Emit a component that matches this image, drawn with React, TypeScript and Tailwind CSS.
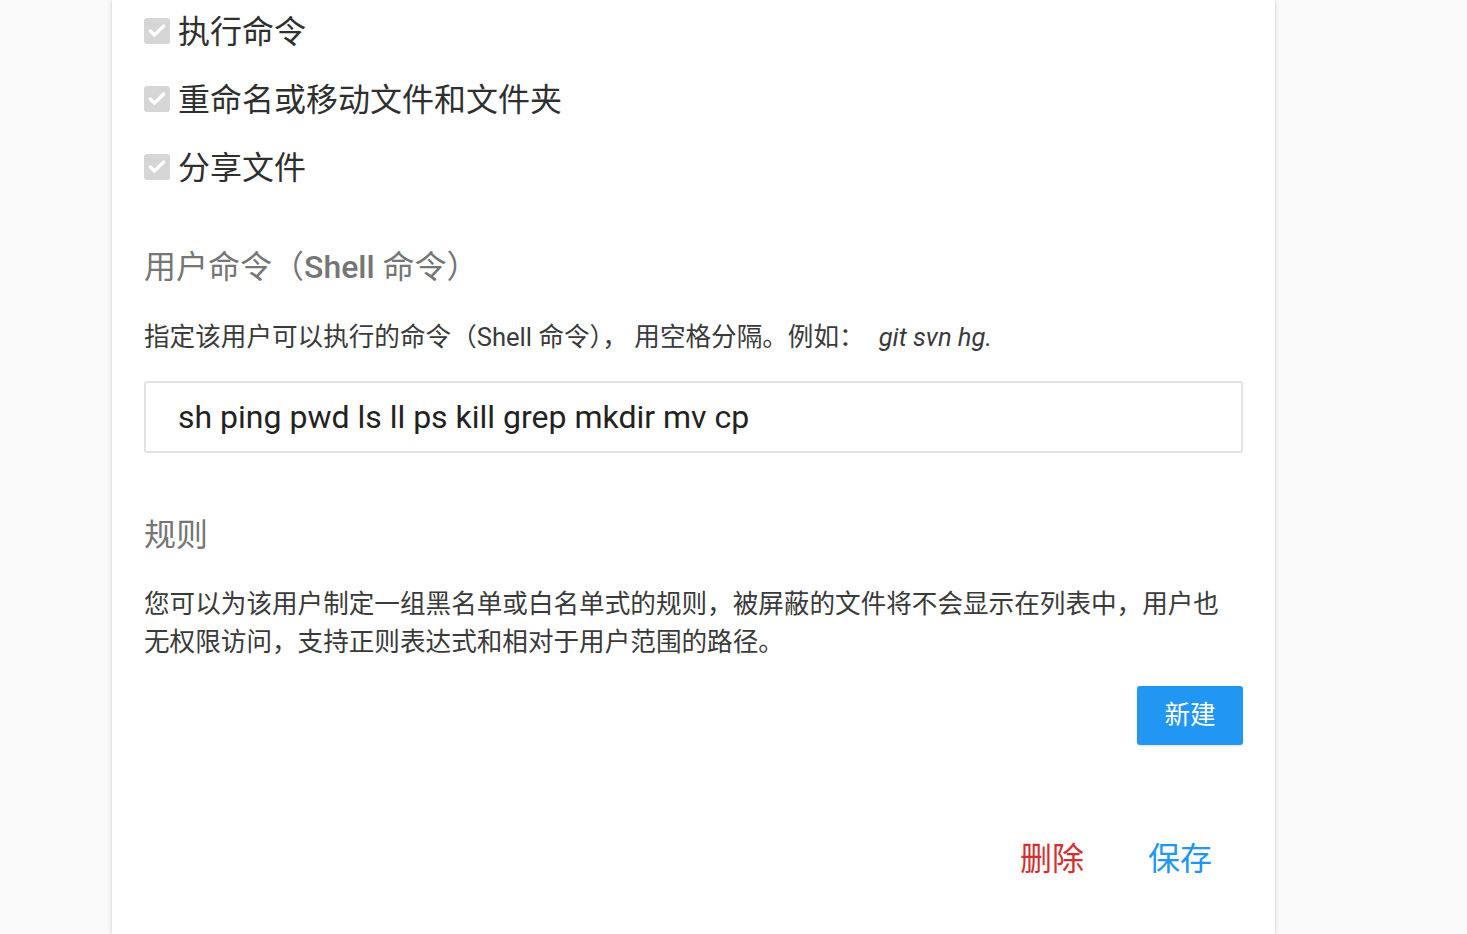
import { Check } from "lucide-react";

const perms = ["执行命令", "重命名或移动文件和文件夹", "分享文件"];

const font = "font-['Roboto','Noto_Sans_CJK_SC',sans-serif]";

export default function App() {
  return (
    <div className={`min-h-[934px] bg-[#fafafa] ${font}`}>
      <div className="ml-[112px] w-[1163px] min-h-[934px] bg-white px-8 shadow-[0_0_4px_rgba(0,0,0,0.12),0_2px_6px_rgba(0,0,0,0.08)]">
        <div className="flex flex-col gap-2 pt-[1px]">
          {perms.map((p) => (
            <label key={p} className="flex h-[60px] items-center gap-2">
              <span className="flex h-[26px] w-[26px] items-center justify-center rounded-[3px] bg-[#d6d6d6]">
                <Check className="h-[20px] w-[20px] text-white" strokeWidth={4} />
              </span>
              <span className="pt-[2px] text-[32px] leading-none text-[#2f2f2f]">{p}</span>
            </label>
          ))}
        </div>

        <h3 className="mt-[50px] text-[32px] leading-[40px] text-[#767676]">
          用户命令（<span className="font-medium">Shell</span> 命令）
        </h3>
        <p className="mt-[31px] text-[25.6px] leading-[38px] text-[#3a3a3a]">
          {"指定该用户可以执行的命令（Shell 命令）， 用空格分隔。例如："}
          <i className="ml-[14px]">git svn hg.</i>
        </p>
        <input
          readOnly
          value="sh ping pwd ls ll ps kill grep mkdir mv cp"
          className="mt-[25px] h-[72px] w-full rounded-[3px] border-2 border-[#e2e2e2] px-[32px] text-[32px] text-[#222] outline-none"
        />

        <h3 className="mt-[62px] text-[32px] leading-[40px] text-[#767676]">规则</h3>
        <p className="mt-[31px] text-[25.6px] leading-[37.5px] text-[#3a3a3a]">
          您可以为该用户制定一组黑名单或白名单式的规则，被屏蔽的文件将不会显示在列表中，用户也无权限访问，支持正则表达式和相对于用户范围的路径。
        </p>
        <div className="mt-[25px] flex justify-end">
          <button className="h-[59px] w-[106px] rounded-[3px] bg-[#2196f3] text-[25.6px] text-white shadow-[0_1px_3px_rgba(0,0,0,0.12)]">
            新建
          </button>
        </div>

        <div className="mt-[92px] flex justify-end gap-16 pr-[31px]">
          <button className="text-[32px] leading-[44px] text-[#d32f2f]">删除</button>
          <button className="text-[32px] leading-[44px] text-[#2196f3]">保存</button>
        </div>
      </div>
    </div>
  );
}
